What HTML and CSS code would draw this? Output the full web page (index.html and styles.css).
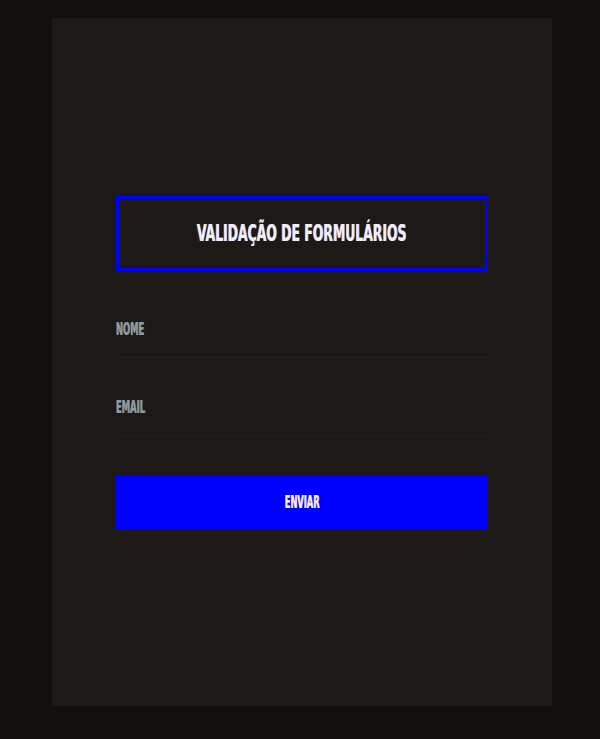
FILE: index.html
```html
<!DOCTYPE html>
<html lang="pt-BR">
<head>
<meta charset="utf-8">
<title>Validação de Formulários</title>
<link rel="stylesheet" href="styles.css">
</head>
<body>
<main class="card">
  <form class="form" novalidate>
    <div class="title-box">
      <h1 class="title"><span class="squeeze">Validação de Formulários</span></h1>
    </div>
    <div class="field">
      <label class="label" for="nome"><span class="squeeze-left">Nome</span></label>
      <input class="input" id="nome" type="text">
    </div>
    <div class="field">
      <label class="label" for="email"><span class="squeeze-left">Email</span></label>
      <input class="input" id="email" type="email">
    </div>
    <button class="submit" type="button"><span class="squeeze-btn">Enviar</span></button>
  </form>
</main>
</body>
</html>
```

FILE: styles.css
```css
* { box-sizing: border-box; }

html, body {
  margin: 0;
  padding: 0;
  background: #12100e;
  height: 100%;
}

body {
  padding-top: 18px;
  font-family: "Liberation Sans Narrow", "DejaVu Sans Condensed", "Liberation Sans", sans-serif;
  font-weight: 700;
  text-transform: uppercase;
}

.card {
  width: 500px;
  height: 688px;
  margin: 0 0 0 52px;
  background: #1c1916;
  display: flex;
  flex-direction: column;
  justify-content: center;
  padding: 0 64px;
}

.form {
  display: flex;
  flex-direction: column;
}

.title-box {
  height: 75px;
  border: 3px solid #0000ff;
  display: flex;
  align-items: center;
  justify-content: center;
  margin-bottom: 50px;
}

.title {
  margin: 0;
  font-size: 23px;
  line-height: 24px;
  color: #eef0f8;
  text-shadow: -1px 0 rgba(214, 122, 60, 0.85), 1px 0 rgba(90, 140, 255, 0.85);
  white-space: nowrap;
}

.squeeze {
  display: inline-block;
  transform: scaleX(0.6);
}

.squeeze-btn {
  display: inline-block;
  transform: scaleX(0.54);
}

.squeeze-left {
  display: inline-block;
  transform: scaleX(0.55);
  transform-origin: left center;
}

.field {
  display: flex;
  flex-direction: column;
  margin-bottom: 41px;
}

.field:last-of-type { margin-bottom: 40px; }

.label {
  display: block;
  height: 16px;
  font-size: 17px;
  line-height: 16px;
  color: #8e9ba0;
  text-shadow: -1px 0 rgba(190, 120, 70, 0.6), 1px 0 rgba(70, 150, 200, 0.6);
}

.input {
  height: 21px;
  border: 0;
  border-bottom: 1px solid #0a0ad0;
  background: transparent;
  outline: none;
  color: #eef0f8;
  font: inherit;
  padding: 0;
}

.submit {
  height: 53px;
  border: 0;
  background: #0000ff;
  color: #f2f0ff;
  font-family: inherit;
  font-weight: 700;
  text-transform: uppercase;
  font-size: 17px;
  text-shadow: -1px 0 rgba(230, 90, 150, 0.7), 1px 0 rgba(120, 200, 255, 0.7);
  cursor: pointer;
  padding: 0;
}
```
